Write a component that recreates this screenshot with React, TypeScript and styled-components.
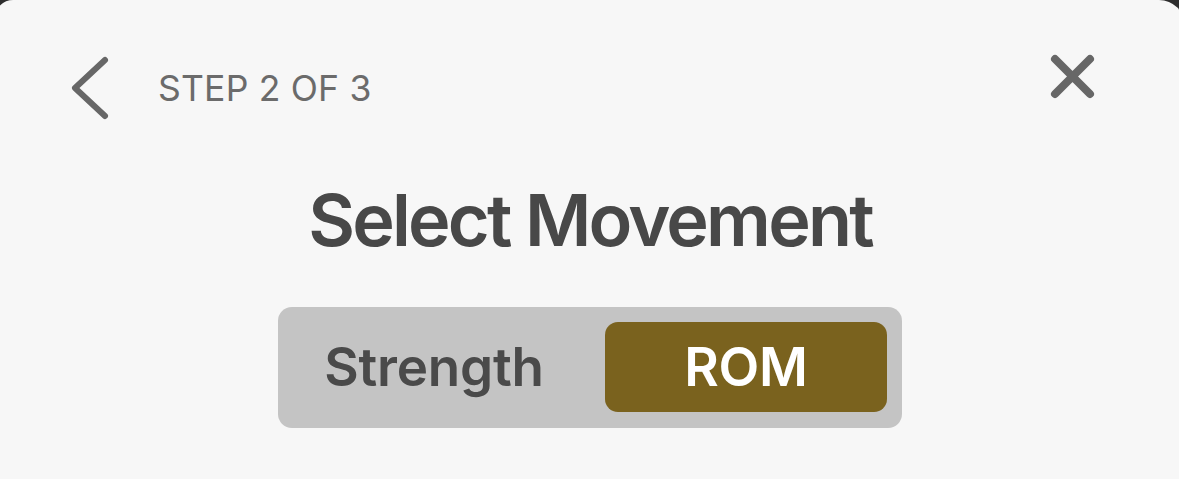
import React, { useState } from 'react';
import styled, { createGlobalStyle } from 'styled-components';

const GlobalStyle = createGlobalStyle`
  html, body {
    margin: 0;
    padding: 0;
    background: #2e2e2e;
    overflow: hidden;
  }
  * {
    box-sizing: border-box;
  }
`;

const Page = styled.div`
  width: 100%;
  height: 100vh;
  overflow: hidden;
`;

const Sheet = styled.div`
  margin: 0 -6px 0 -5px;
  min-height: 100vh;
  padding-top: 54px;
  background-color: #f7f7f7;
  border-radius: 18px 26px 0 0;
  font-family: 'Inter', 'Noto Sans', sans-serif;
`;

const Header = styled.div`
  display: flex;
  justify-content: space-between;
  align-items: flex-start;
  padding: 0 90px 0 75px;
`;

const BackGroup = styled.div`
  display: flex;
  align-items: center;
  gap: 48px;
`;

const IconButton = styled.button`
  display: flex;
  padding: 0;
  border: none;
  background: none;
  color: #676767;
  cursor: pointer;
`;

const StepLabel = styled.span`
  font-size: 35.5px;
  font-weight: 400;
  color: #6b6b6b;
  letter-spacing: 0.2px;
`;

const Title = styled.h1`
  margin: 62px 0 0;
  text-align: center;
  font-size: 72px;
  line-height: 1;
  font-weight: 600;
  color: #484848;
  letter-spacing: -2.8px;
`;

const Segmented = styled.div`
  display: grid;
  grid-template-columns: 282px 282px;
  gap: 30px;
  width: fit-content;
  margin: 51px auto 0;
  padding: 15px 15px 16px;
  background-color: #c4c4c4;
  border-radius: 14px;
`;

const Segment = styled.button<{ $active: boolean }>`
  height: 90px;
  border: none;
  border-radius: 13px;
  padding: 0;
  background-color: ${p => (p.$active ? '#7a621e' : 'transparent')};
  color: ${p => (p.$active ? '#ffffff' : '#4a4a4a')};
  font-family: 'Inter', 'Noto Sans', sans-serif;
  font-size: 53px;
  font-weight: 600;
  letter-spacing: -0.2px;
  cursor: pointer;
`;

const ChevronLeft = () => (
  <svg width="40" height="68" viewBox="0 0 40 68" fill="none">
    <path
      d="M35 6 L5 34 L35 62"
      stroke="currentColor"
      strokeWidth="6"
      strokeLinecap="round"
      strokeLinejoin="round"
    />
  </svg>
);

const CloseIcon = () => (
  <svg width="45" height="45" viewBox="0 0 45 45" fill="none">
    <path
      d="M5 5 L40 40 M40 5 L5 40"
      stroke="currentColor"
      strokeWidth="8"
      strokeLinecap="round"
    />
  </svg>
);

const modes = ['Strength', 'ROM'];

const App: React.FC = () => {
  const [mode, setMode] = useState('ROM');
  return (
    <Page>
      <GlobalStyle />
      <Sheet>
        <Header>
          <BackGroup>
            <IconButton aria-label="Back">
              <ChevronLeft />
            </IconButton>
            <StepLabel>STEP 2 OF 3</StepLabel>
          </BackGroup>
          <IconButton aria-label="Close">
            <CloseIcon />
          </IconButton>
        </Header>
        <Title>Select Movement</Title>
        <Segmented>
          {modes.map(m => (
            <Segment key={m} $active={m === mode} onClick={() => setMode(m)}>
              {m}
            </Segment>
          ))}
        </Segmented>
      </Sheet>
    </Page>
  );
};

export default App;
